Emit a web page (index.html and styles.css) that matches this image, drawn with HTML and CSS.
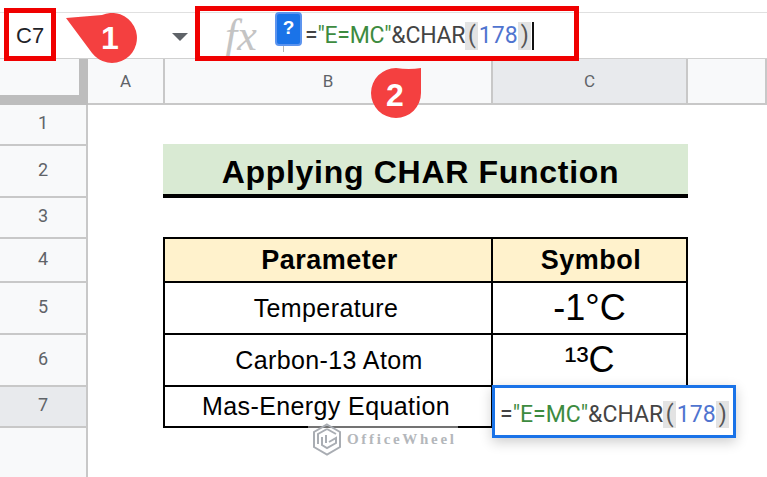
FILE: index.html
```html
<!DOCTYPE html>
<html lang="en">
<head>
  <meta charset="UTF-8">
  <title>Applying CHAR Function</title>
  <link rel="stylesheet" href="styles.css">
</head>
<body>
  <div class="page">
    <div class="formula-bar">
      <div class="name-box">C7</div>
      <svg class="name-arrow" width="16" height="8" viewBox="0 0 16 8"><path d="M0 0H16L8 8Z" fill="#5f6368"/></svg>
      <div class="fx">fx</div>
      <div class="badge">?</div>
      <div class="formula"><span class="f-op">=</span><span class="f-str">"E=MC"</span><span class="f-op">&amp;CHAR</span><span class="f-par">(</span><span class="f-num">178</span><span class="f-par">)</span><span class="cursor"></span></div>
    </div>

    <div class="sheet">
      <div class="corner"></div>
      <div class="col-head">A</div>
      <div class="col-head">B</div>
      <div class="col-head active">C</div>
      <div class="col-head"></div>

      <div class="row-head">1</div>
      <div class="blank-row"></div>

      <div class="row-head">2</div>
      <div class="blank"></div>
      <div class="title">Applying CHAR Function</div>
      <div class="blank"></div>

      <div class="row-head">3</div>
      <div class="blank-row"></div>

      <div class="row-head">4</div>
      <div class="blank"></div>
      <div class="cell first head">Parameter</div>
      <div class="cell head">Symbol</div>
      <div class="blank"></div>

      <div class="row-head">5</div>
      <div class="blank"></div>
      <div class="cell first">Temperature</div>
      <div class="cell big">-1°C</div>
      <div class="blank"></div>

      <div class="row-head">6</div>
      <div class="blank"></div>
      <div class="cell first carbon">Carbon-13 Atom</div>
      <div class="cell big">¹³C</div>
      <div class="blank"></div>

      <div class="row-head active">7</div>
      <div class="blank"></div>
      <div class="cell first">Mas-Energy Equation</div>
      <div class="cell"></div>
      <div class="blank"></div>

      <div class="row-head end"></div>
      <div class="blank-row"></div>
    </div>

    <!-- annotations on top of the sheet -->
    <div class="mark mark-name"></div>
    <div class="mark mark-formula"></div>

    <svg class="callout callout-1" width="72" height="52" viewBox="0 0 72 52">
      <path d="M0 5 L36 2 A25 25 0 1 1 26 40 Z" fill="#f44040"/>
    </svg>
    <div class="callout-num num-1">1</div>

    <svg class="callout callout-2" width="50" height="50" viewBox="0 0 50 50">
      <path d="M50 0 V25 A25 25 0 1 1 25 0 Q38 2 50 0 Z" fill="#f44040"/>
    </svg>
    <div class="callout-num num-2">2</div>

    <div class="editor"><span class="f-op">=</span><span class="f-str">"E=MC"</span><span class="f-op">&amp;CHAR</span><span class="f-par">(</span><span class="f-num">178</span><span class="f-par">)</span></div>

    <div class="watermark">
      <svg width="30" height="33" viewBox="0 0 30 33" fill="none" stroke="#a9adb3" stroke-width="2">
        <path d="M15 1.5 L28 9 V24 L15 31.5 L2 24 V9 Z"/>
        <path d="M15 6 L24 11 M15 6 L6 11 V21"/>
        <path d="M10 14 V22 L15 25 L24 20 V15 L17 19"/>
        <path d="M14 12 V20"/>
      </svg>
      <span class="wm-text">OfficeWheel</span>
    </div>
  </div>
</body>
</html>
```

FILE: styles.css
```css
* {
  box-sizing: border-box;
}

body {
  margin: 0;
  background-color: #fff;
  font-family: "Liberation Sans", Arial, sans-serif;
  color: #000;
}

.page {
  position: relative;
  width: 767px;
  height: 477px;
  overflow: hidden;
}

/* formula bar */
.formula-bar {
  display: flex;
  align-items: center;
  height: 47px;
  margin-top: 12px;
  border-top: 1px solid #e0e0e0;
  border-bottom: 1px solid #d0d0d0;
}

.name-box {
  width: 172px;
  padding-left: 16px;
  font-size: 22px;
  color: #1f2328;
}

.name-arrow {
  flex: none;
  margin-top: 2px;
}

.fx {
  width: 50px;
  margin-left: 37px;
  font-family: "Liberation Serif", serif;
  font-style: italic;
  font-size: 44px;
  line-height: 40px;
  color: #c4c4c4;
}

.badge {
  position: relative;
  width: 27px;
  height: 34px;
  margin-top: -13px;
  border: 2px solid #5c94ee;
  border-radius: 4px;
  background-color: #1a73e8;
  color: #fff;
  font-size: 19px;
  font-weight: bold;
  line-height: 28px;
  text-align: center;
}

/* little tick of the cursor line under the badge */
.badge::after {
  content: "";
  position: absolute;
  left: 6px;
  top: 32px;
  width: 1px;
  height: 6px;
  background-color: #b5b5b5;
}

.formula {
  display: flex;
  align-items: center;
  margin-top: 1px;
  margin-left: 3px;
  font-family: Roboto, sans-serif;
  font-size: 23px;
  line-height: 28px;
  letter-spacing: -0.25px;
}

.cursor {
  width: 2px;
  height: 28px;
  margin-left: 1px;
  background-color: #111;
}

.f-op { color: #444; }
.f-str { color: #3d8b40; }
.f-num { width: 40px; color: #4f74cf; letter-spacing: 0; text-align: center; }
.f-par { width: 13px; background-color: #e3e3e3; color: #555; text-align: center; }

/* sheet grid */
.sheet {
  display: grid;
  grid-template-columns: 88px 77px 328px 195px 1fr;
  grid-template-rows: 46px 41px 52px 41px 44px 52px 52px 41px 1fr;
  height: 418px;
}

.corner {
  background-color: #f8f9fa;
  border-right: 9px solid #bdbdbd;
  border-bottom: 10px solid #bdbdbd;
}

.col-head {
  display: flex;
  align-items: center;
  justify-content: center;
  background-color: #f8f9fa;
  border-right: 2px solid #c8c8c8;
  border-bottom: 2px solid #c8c8c8;
  font-family: Roboto, sans-serif;
  font-size: 17px;
  color: #5f6368;
}

.row-head {
  display: flex;
  align-items: center;
  justify-content: center;
  padding-bottom: 4px;
  background-color: #f8f9fa;
  border-right: 2px solid #c8c8c8;
  border-bottom: 2px solid #c8c8c8;
  font-family: Roboto, sans-serif;
  font-size: 18px;
  color: #5f6368;
}

.active {
  background-color: #e8eaed;
}

.end {
  border-bottom: none;
}

.blank-row {
  grid-column: 2 / 6;
}

.title {
  grid-column: 3 / 5;
  margin-left: -2px;
  margin-top: -2px;
  padding-top: 2px;
  padding-right: 10px;
  background-color: #d9ead3;
  border-bottom: 4px solid #000;
  font-size: 32px;
  font-weight: bold;
  letter-spacing: 0.7px;
  line-height: 52px;
  text-align: center;
}

.cell {
  display: flex;
  align-items: center;
  justify-content: center;
  border-right: 2px solid #000;
  border-bottom: 2px solid #000;
  font-size: 25px;
  letter-spacing: 0.4px;
}

.first {
  margin-left: -2px;
  padding-right: 4px;
  border-left: 2px solid #000;
}

.carbon {
  padding-right: 0;
  padding-left: 2px;
}

.head {
  margin-top: -2px;
  padding-right: 0;
  padding-left: 3px;
  border-top: 2px solid #000;
  background-color: #fff2cc;
  font-size: 27px;
  font-weight: bold;
  letter-spacing: 0.5px;
}

.big {
  font-size: 36px;
  letter-spacing: 0;
}

/* annotations */
.mark {
  position: absolute;
  border: 5px solid #f00000;
}

.mark-name {
  left: 4px;
  top: 8px;
  width: 52px;
  height: 53px;
}

.mark-formula {
  left: 195px;
  top: 6px;
  width: 384px;
  height: 55px;
}

.callout {
  position: absolute;
}

.callout-1 {
  left: 66px;
  top: 13px;
}

.callout-2 {
  left: 371px;
  top: 68px;
}

.callout-num {
  position: absolute;
  width: 30px;
  color: #fff;
  font-size: 32px;
  font-weight: bold;
  line-height: 30px;
  text-align: center;
}

.num-1 {
  left: 95px;
  top: 23px;
}

.num-2 {
  left: 380px;
  top: 80px;
}

.editor {
  position: absolute;
  left: 492px;
  top: 385px;
  width: 244px;
  height: 53px;
  display: flex;
  align-items: center;
  padding-left: 5px;
  padding-top: 5px;
  background-color: #fff;
  border: 3px solid #1a73e8;
  box-shadow: 0 4px 12px rgba(0, 0, 0, 0.2);
  font-family: Roboto, sans-serif;
  font-size: 23px;
}

.watermark {
  position: absolute;
  left: 308px;
  top: 423px;
  width: 150px;
  display: flex;
  align-items: center;
  gap: 5px;
  padding-left: 4px;
  background-color: rgba(255, 255, 255, 0.45);
}

.wm-text {
  font-family: "Liberation Serif", serif;
  font-size: 15px;
  font-weight: bold;
  letter-spacing: 2.7px;
  color: #b4b7bb;
}
```
